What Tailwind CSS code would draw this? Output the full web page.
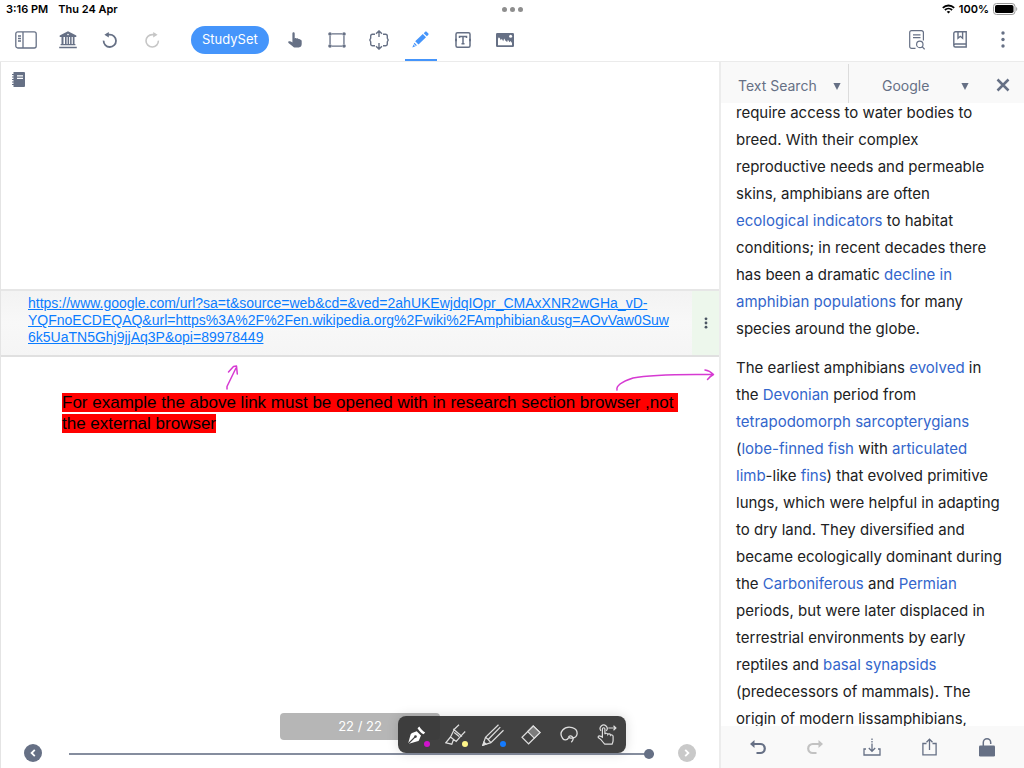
<!DOCTYPE html>
<html lang="en">
<head>
<meta charset="utf-8">
<meta name="viewport" content="width=device-width, initial-scale=1">
<title>StudySet</title>
<script src="https://cdn.jsdelivr.net/npm/@tailwindcss/browser@4"></script>
</head>
<body class="bg-white font-['Inter','Liberation_Sans',sans-serif] text-[#202122]">
<div class="relative flex h-screen flex-col overflow-hidden">

  <!-- Status bar -->
  <div class="relative flex h-[18px] shrink-0 items-center justify-between pr-1.5 pl-1.5 text-[11px] font-semibold text-black">
    <div class="flex gap-2.5"><span>3:16 PM</span><span>Thu 24 Apr</span></div>
    <div class="absolute inset-x-0 top-[7px] flex justify-center gap-[3px]">
      <span class="size-[5px] rounded-full bg-[#8e8e8e]"></span><span class="size-[5px] rounded-full bg-[#8e8e8e]"></span><span class="size-[5px] rounded-full bg-[#8e8e8e]"></span>
    </div>
    <div class="flex items-center gap-1">
      <svg width="13" height="10" viewBox="0 0 13 10" fill="none" stroke="#000" stroke-width="1.8"><path d="M.8 3.8a8.2 8.2 0 0 1 11.4 0M2.9 6a5.2 5.2 0 0 1 7.2 0"/><path d="M6.500 9.600 4.700 7.800a2.700 2.700 0 0 1 3.600 0z" fill="#000" stroke="none"/></svg>
      <span>100%</span>
      <svg width="25" height="12" viewBox="0 0 25 12"><rect x=".5" y=".5" width="21.500" height="11" rx="3" fill="none" stroke="#9a9a9a"/><rect x="2" y="2" width="18.500" height="8" rx="1.800"/><path d="M23.200 4v4c1.400-.6 1.400-3.400 0-4z" fill="#9a9a9a"/></svg>
    </div>
  </div>

  <!-- Toolbar -->
  <header class="flex h-11 shrink-0 items-stretch justify-between border-b border-[#ebebeb] pl-[5px] text-[#667085]">
    <nav class="flex items-stretch" aria-label="Tools">
      <button aria-label="Sidebar" class="flex w-[42px] items-center justify-center">
        <svg width="22" height="18" viewBox="0 0 22 18" fill="none" stroke="currentColor" stroke-width="1.300"><rect x=".8" y=".8" width="20.400" height="16.200" rx="2"/><path d="M8 1v16M3 5h3M3 7.500h3M3 10h3" /></svg>
      </button>
      <button aria-label="Library" class="flex w-[42px] items-center justify-center">
        <svg width="18" height="18" viewBox="0 0 18 18" fill="currentColor"><path d="M9 .3 17.300 4.600V6H.7V4.600z"/><path d="M2.500 6h2v8h-2zM6 6h1.600v8H6zM8.600 6h1.500v8H8.600zM11.100 6h1.500v8h-1.500zM13.800 6h1.700v8h-1.700zM1.600 13h14.800v1.300H1.600zM.2 15.800h17.600v1.400H.2z"/><circle cx="9" cy="3.500" r=".8" fill="#fff"/></svg>
      </button>
      <button aria-label="Undo" class="flex w-[42px] items-center justify-center">
        <svg width="16" height="16" viewBox="0 0 16 16" fill="none" stroke="currentColor" stroke-width="1.800"><path d="M1.600 8.600a6.200 6.200 0 1 0 6-6H4.500"/><path d="M6.800 0v5.400L2.400 2.700z" fill="currentColor" stroke="none"/></svg>
      </button>
      <button aria-label="Redo" class="flex w-[42px] items-center justify-center text-[#c6c6c6]">
        <svg width="16" height="16" viewBox="0 0 16 16" fill="none" stroke="currentColor" stroke-width="1.600"><path d="M14.400 8.600a6.200 6.200 0 1 1-6-6h3"/><path d="M9.200 0v5.400l4.400-2.700z" fill="currentColor" stroke="none"/></svg>
      </button>
      <button class="ml-[18px] h-7 self-center rounded-full bg-[#4595fb] px-[11px] text-[13px] text-white">StudySet</button>
      <button aria-label="Hand" class="ml-[5px] flex w-[42px] items-center justify-center">
        <svg width="14" height="16" viewBox="0 0 14 16" fill="currentColor"><path d="M4.400 1.600c0-1.700 2.300-1.700 2.300 0v4.800c.6-.5 1.500-.4 1.900.2.600-.4 1.500-.3 1.900.4.700-.3 1.700 0 1.900.7.900 0 1.300.6 1.300 1.500v2.900c0 1.800-.9 3.400-3 3.400H7.200c-1.200 0-1.900-.5-2.600-1.300L.5 10.900c-.5-.6-.3-1.400.4-1.600 1.100-.3 2.300.3 3.500 1.100z"/></svg>
      </button>
      <button aria-label="Select area" class="flex w-[42px] items-center justify-center">
        <svg width="18" height="16" viewBox="0 0 18 16" fill="currentColor"><path d="M4 1.200h10v1.300H4zM4 13.500h10v1.300H4zM1.400 4h1.300v8H1.400zM15.300 4h1.300v8h-1.300z"/><circle cx="2" cy="2" r="1.800"/><circle cx="16" cy="2" r="1.800"/><circle cx="2" cy="14" r="1.800"/><circle cx="16" cy="14" r="1.800"/></svg>
      </button>
      <button aria-label="Expand" class="flex w-[42px] items-center justify-center">
        <svg width="20" height="20" viewBox="0 0 20 20" fill="none" stroke="currentColor" stroke-width="1.400"><path d="M6 4.200H3.500a1.800 1.800 0 0 0-1.800 1.800v2.200L.8 10l.9 1.800V14a1.800 1.800 0 0 0 1.800 1.800H6M14 4.200h2.500A1.800 1.800 0 0 1 18.300 6v2.200l.9 1.800-.9 1.800V14a1.800 1.800 0 0 1-1.800 1.800H14M10 1v6M7 3.700 10 .9l3 2.800M10 13v6M7 16.300l3 2.800 3-2.800"/></svg>
      </button>
      <button aria-label="Pen" aria-pressed="true" class="flex w-[42px] items-stretch justify-center px-[5px] text-[#4595fb]">
        <span class="flex flex-1 items-center justify-center border-b-2 border-[#4595fb] pt-0.5">
        <svg width="17" height="17" viewBox="0 0 17 17" fill="currentColor"><path d="M10.800 3.100 14 6.200 6.500 13.400 3.200 10.300zM11.700 2.200l1.300-1.300c.5-.5 1.300-.5 1.800 0l1.400 1.400c.5.5.5 1.200 0 1.700L14.800 5.300zM2.300 11.800l-2 4.700 4.400-1.700-.6-1.600z"/><path d="M1 12.500 4 15.600" stroke="#fff" stroke-width="1"/></svg></span>
      </button>
      <button aria-label="Text box" class="flex w-[42px] items-center justify-center">
        <svg width="16" height="16" viewBox="0 0 16 16" fill="none" stroke="currentColor" stroke-width="1.500"><rect x="1" y=".8" width="14" height="14.400" rx="1.500"/><path d="M4.500 6V4.600h7V6M8 4.600V12M6.500 11.800h3"/><path d="M0 8h2M14 8h2" stroke-width="2.600"/></svg>
      </button>
      <button aria-label="Image" class="flex w-[42px] items-center justify-center">
        <svg width="18" height="14" viewBox="0 0 18 14"><rect width="18" height="14" rx="1.200" fill="currentColor"/><path d="M2 4v8.200h14V10l-1.400-2-1.100 1.300-1.600-2.500-.7 2.200-1.700-1.200-1.300-2.200-1 2.700L5.800 5.700l-1 1.500L3.500 4.600 2.800 5.500z" fill="#fff"/><circle cx="14.600" cy="3.300" r="1.500" fill="#fff"/></svg>
      </button>
    </nav>
    <div class="flex items-stretch">
      <button aria-label="Search document" class="flex w-[43px] items-center justify-center">
        <svg width="16" height="20" viewBox="0 0 16 20" fill="none" stroke="currentColor" stroke-width="1.200"><path d="M6.500 18.400H2.600A1.900 1.900 0 0 1 .7 16.500V2.600A1.900 1.900 0 0 1 2.600.7h9.900a1.900 1.900 0 0 1 1.900 1.900v8M4 4.800h7.500M4 7.600h7.500"/><circle cx="10.800" cy="14.400" r="3.200"/><path d="m13.100 16.700 2.500 2.600"/></svg>
      </button>
      <button aria-label="Bookmarks" class="flex w-[43px] items-center justify-center">
        <svg width="14" height="17" viewBox="0 0 14 17" fill="none" stroke="currentColor" stroke-width="1.400"><path d="M13.200 13H2.300a1.500 1.500 0 0 0 0 3h10.900V.8H2.500A1.700 1.700 0 0 0 .8 2.500v12M5 1v6.200l2.300-1.900 2.300 1.900V1"/></svg>
      </button>
      <button aria-label="More" class="flex w-[43px] items-center justify-center">
        <svg width="4" height="17" viewBox="0 0 4 17" fill="currentColor"><circle cx="2" cy="2" r="1.700"/><circle cx="2" cy="8.500" r="1.700"/><circle cx="2" cy="15" r="1.700"/></svg>
      </button>
    </div>
  </header>

  <div class="flex min-h-0 flex-1">
    <!-- Document -->
    <main class="relative flex min-w-0 flex-1 flex-col border-l border-[#e4e4e4]">
      <section class="h-[229px] shrink-0 border-b-2 border-[#e6e6e6] pt-2.5 pl-[11px]">
        <button aria-label="Notebook" class="block text-[#667085]">
          <svg width="14" height="15" viewBox="0 0 14 15"><path d="M1.500 0H12a1 1 0 0 1 1 1v13a1 1 0 0 1-1 1H1.500z" fill="currentColor"/><path d="M0 2.500h3M0 5h3M0 7.500h3M0 10h3M0 12.500h3" stroke="currentColor"/><path d="M5 3.800h6M5 6.300h6" stroke="#fff" stroke-width="1.200"/></svg>
        </button>
      </section>
      <section class="flex h-[66px] shrink-0 items-stretch border-b-2 border-[#e0e0e0] bg-linear-to-b from-[#f3f3f3] via-[#f8f8f8] to-[#f5f5f5]">
        <p class="min-w-0 flex-1 pt-1 pl-[27px] font-['Liberation_Sans',sans-serif] text-[14px] leading-[17px] whitespace-nowrap"><a href="#" class="text-[#0a7cff] underline">https://www.google.com/url?sa=t&amp;source=web&amp;cd=&amp;ved=2ahUKEwjdqIOpr_CMAxXNR2wGHa_vD-<br>YQFnoECDEQAQ&amp;url=https%3A%2F%2Fen.wikipedia.org%2Fwiki%2FAmphibian&amp;usg=AOvVaw0Suw<br>6k5UaTN5Ghj9jjAq3P&amp;opi=89978449</a></p>
        <button aria-label="Link options" class="flex w-[27px] items-center justify-center bg-[#edf7ec] text-[#4b5563]">
          <svg width="4" height="12" viewBox="0 0 4 12" fill="currentColor"><circle cx="2" cy="1.800" r="1.400"/><circle cx="2" cy="6" r="1.400"/><circle cx="2" cy="10.200" r="1.400"/></svg>
        </button>
      </section>
      <section class="relative min-h-0 flex-1 pt-[35px] pl-[61px]">
        <p class="font-['Liberation_Sans',sans-serif] text-[17px] leading-[21px] whitespace-nowrap text-black"><span class="bg-[#ff0000]">For example the above link must be opened with in research section browser ,not&nbsp;</span><br><span class="bg-[#ff0000]">the external browser</span></p>
        <svg class="absolute top-0 left-0" width="718" height="40" viewBox="0 0 718 40" fill="none" stroke="#d63ad2" stroke-width="1.500" stroke-linecap="round" stroke-linejoin="round"><path d="M226 32v-2.500L235 11M227.500 15l5-5.500 3-.5.800 8"/><path d="M616 33c-1-4 4-8 16-12 12-2.500 40-4 80-3.500M704 13c4 .5 7 3 8.500 4.500-2 1-3.500 2-6 5"/></svg>
      </section>
      <div class="absolute bottom-7 left-1/2 h-[27px] w-40 -translate-x-1/2 rounded bg-[#b6b6b6] text-center text-[13px] leading-[27px] text-white">22 / 22</div>
      <div class="flex h-[30px] shrink-0 items-center pr-[23px] pl-[23px]">
        <button aria-label="Previous page" class="flex size-[18px] items-center justify-center rounded-full bg-[#667085] text-white"><svg width="6" height="8" viewBox="0 0 6 8" fill="none" stroke="currentColor" stroke-width="1.800"><path d="M4.800.8 1.600 4l3.200 3.200"/></svg></button>
        <input type="range" min="1" max="22" value="22" aria-label="Page" class="mt-0.5 mr-6 ml-[27px] h-[10px] min-w-0 flex-1 appearance-none bg-transparent [&::-webkit-slider-runnable-track]:h-[2px] [&::-webkit-slider-runnable-track]:bg-[#858d9e] [&::-webkit-slider-thumb]:-mt-1 [&::-webkit-slider-thumb]:size-[10px] [&::-webkit-slider-thumb]:appearance-none [&::-webkit-slider-thumb]:rounded-full [&::-webkit-slider-thumb]:bg-[#667085]">
        <button aria-label="Next page" class="flex size-[18px] items-center justify-center rounded-full bg-[#c9c9c9] text-white"><svg width="6" height="8" viewBox="0 0 6 8" fill="none" stroke="currentColor" stroke-width="1.800"><path d="M1.200.8 4.400 4 1.200 7.200"/></svg></button>
      </div>
    </main>

    <!-- Research panel -->
    <aside class="flex w-[305px] shrink-0 flex-col border-l-2 border-[#ececec]">
      <div class="flex h-[41px] shrink-0 items-stretch bg-[#f9f9f9] text-[#667085]">
        <div class="relative mt-0.5 flex w-32 border-r border-[#dcdcdc]">
          <select aria-label="Search type" class="w-full appearance-none pt-1 pl-[17px] text-[14px]"><option>Text Search</option></select>
          <svg class="pointer-events-none absolute top-[19px] right-[7px]" width="8" height="7" viewBox="0 0 8 7" fill="currentColor"><path d="M.4 0h7.200L4 7z"/></svg>
        </div>
        <div class="relative mt-0.5 flex flex-1">
          <select aria-label="Search engine" class="w-full appearance-none pt-1 pl-[33px] text-[14px]"><option>Google</option></select>
          <svg class="pointer-events-none absolute top-[19px] right-[12px]" width="8" height="7" viewBox="0 0 8 7" fill="currentColor"><path d="M.4 0h7.200L4 7z"/></svg>
        </div>
        <button aria-label="Close" class="flex w-[43px] items-center justify-center pt-1"><svg width="14" height="14" viewBox="0 0 14 14" stroke="currentColor" stroke-width="2.500"><path d="m1.500 1.500 11 11M12.500 1.500l-11 11"/></svg></button>
      </div>
      <article class="min-h-0 flex-1 overflow-hidden pl-[15px] text-[15px] leading-[27px] whitespace-nowrap [&_a]:text-[#3366cc]">
        <p class="-mt-1">require access to water bodies to<br>breed. With their complex<br>reproductive needs and permeable<br>skins, amphibians are often<br><a href="#">ecological indicators</a> to habitat<br>conditions; in recent decades there<br>has been a dramatic <a href="#">decline in<br>amphibian populations</a> for many<br>species around the globe.</p>
        <p class="mt-3">The earliest amphibians <a href="#">evolved</a> in<br>the <a href="#">Devonian</a> period from<br><a href="#">tetrapodomorph</a> <a href="#">sarcopterygians</a><br>(<a href="#">lobe-finned fish</a> with <a href="#">articulated<br>limb</a>-like <a href="#">fins</a>) that evolved primitive<br>lungs, which were helpful in adapting<br>to dry land. They diversified and<br>became ecologically dominant during<br>the <a href="#">Carboniferous</a> and <a href="#">Permian</a><br>periods, but were later displaced in<br>terrestrial environments by early<br>reptiles and <a href="#">basal synapsids</a><br>(predecessors of mammals). The<br>origin of modern lissamphibians,</p>
      </article>
      <footer class="grid h-[42px] shrink-0 grid-cols-5 bg-[#f9f9f9] pr-2 pl-2 text-[#667085]">
        <button aria-label="Back" class="flex items-center justify-center"><svg width="16" height="15" viewBox="0 0 16 15" fill="none" stroke="currentColor" stroke-width="2.200"><path d="M3 4h7.300a4.400 4.400 0 0 1 0 9H6.500"/><path d="M4.500 0v8L0 4z" fill="currentColor" stroke="none"/></svg></button>
        <button aria-label="Forward" class="flex items-center justify-center text-[#c2c2c2]"><svg width="16" height="15" viewBox="0 0 16 15" fill="none" stroke="currentColor" stroke-width="2.200"><path d="M13 4H5.700a4.400 4.400 0 0 0 0 9h3.800"/><path d="M11.500 0v8L16 4z" fill="currentColor" stroke="none"/></svg></button>
        <button aria-label="Download" class="flex items-center justify-center"><svg width="18" height="18" viewBox="0 0 18 18" fill="none" stroke="currentColor" stroke-width="1.300"><path d="M3 11H1v6h16v-6h-2M9 5.500v7.500M5.800 10 9 13.300l3.200-3.300M9 .5V2M9 3v1.500"/></svg></button>
        <button aria-label="Share" class="flex items-center justify-center"><svg width="15" height="18" viewBox="0 0 15 18" fill="none" stroke="currentColor" stroke-width="1.300"><path d="M4.500 5.500H.9v11.400h13.200V5.500h-3.600M7.500 12V1.500M4.500 4.200l3-3 3 3"/></svg></button>
        <button aria-label="Unlock" class="flex items-center justify-center"><svg width="16" height="19" viewBox="0 0 16 19" fill="none" stroke="currentColor" stroke-width="1.500"><path d="M4.300 8V4.500a3.700 3.700 0 0 1 7.400 0V6" /><rect x="0" y="7.500" width="16" height="11" rx="1.300" fill="currentColor" stroke="none"/></svg></button>
      </footer>
    </aside>
  </div>

  <!-- Floating pen palette -->
  <div role="toolbar" aria-label="Pens" class="absolute bottom-[15px] left-1/2 flex h-[37px] w-[228px] -translate-x-1/2 items-stretch rounded-lg bg-[#373737]/95 text-[#dedede] shadow-[0_0_12px_rgba(0,0,0,0.15)] [&>button]:relative [&>button]:flex [&>button]:flex-1 [&>button]:items-center [&>button]:justify-center">
    <button aria-label="Fountain pen"><svg width="20" height="20" viewBox="0 0 20 20" fill="#fff"><path d="M1 19 3.600 9.600c.2-.8.7-1.400 1.500-1.700l4.600-1.700 4.300 4.300-1.900 4.400c-.3.700-.8 1.200-1.600 1.400zM10.500 3.200 12.300 1.500c1.600 2.500 3.200 4.200 5.900 6L16.500 9.300c-2.500-1.500-4.500-3.500-6-6.100z"/><path d="M1 19l7-7" stroke="#404040" stroke-width="1.100"/><circle cx="8.500" cy="11.600" r="1.300" fill="#404040"/></svg><span class="absolute right-[6px] bottom-[6px] size-1.5 rounded-full bg-[#d012cc]"></span></button>
    <button aria-label="Highlighter"><svg width="21" height="21" viewBox="0 0 21 21" fill="none" stroke="currentColor" stroke-width="1.200"><path d="M14 .8 8.800 5.800M8.200 5 17 12.500M20.200 7.500 16 11.800M9 6 5.500 13l5.700 4.500L16 11.800M5.500 13 .8 18.800l6 1.400 1.700-4.700M9.200 8.500l5 4"/></svg><span class="absolute right-[6px] bottom-[6px] size-1.5 rounded-full bg-[#fff68a]"></span></button>
    <button aria-label="Pencil"><svg width="22" height="22" viewBox="0 0 22 22" fill="none" stroke="currentColor" stroke-width="1.200"><path d="M16.500.8 3.500 13.300.9 21.200l8-2.600L21.500 6.200M18.300 3.200 6.200 15.500M3.500 13.300l2.700 2.200 2.700 3.100"/><path d="m.9 21.200 1-3.200 2.200 2.100z" fill="currentColor"/></svg><span class="absolute right-[6px] bottom-[6px] size-1.5 rounded-full bg-[#147bff]"></span></button>
    <button aria-label="Eraser"><svg width="20" height="20" viewBox="0 0 20 20" fill="none" stroke="currentColor" stroke-width="1.200"><path d="M12.300 1 1 12.200l6.600 6.600L19 7.600z"/><path d="M12.300 1 6.700 6.600l6.600 6.500L19 7.600z" fill="#7c7c7c"/></svg></button>
    <button aria-label="Lasso"><svg width="18" height="18" viewBox="0 0 18 18" fill="none" stroke="currentColor" stroke-width="1.300"><path d="M8.500 11.900C7 14.600 4.200 14.500 2.700 12.500.8 10 .5 6.500 2.700 4 5 1.400 8.700.8 12.200 1.600c3.300.8 5.100 3.400 4.900 6.200-.2 2.300-2.400 3.900-4.300 4.200-2.500.3-4.200-.3-4-1.300.3-1 2.200-1.200 3.300-.3 1.700 1.300 1.400 3.500-.8 5.800"/></svg></button>
    <button aria-label="Gesture"><svg width="20" height="21" viewBox="0 0 20 21" fill="none" stroke="currentColor" stroke-width="1.200"><path d="M5.400 13.200V5c0-1.700 2.500-1.700 2.500 0v5.200c.3-1.300 2.600-1.300 2.900.3.600-1 2.600-.7 2.700.7.700-.8 2.600-.3 2.600 1.200v4.100c0 1.500-.6 2.300-1 3.600H7.700c-1.500-1.300-2.700-4-5.800-6-1.600-1.100-.3-2.700 1.300-2 .9.300 1.500.7 2.200 1.100z"/><path d="M4 6.800a3.500 3.500 0 1 1 5.300 0M11.300 4h7.500M16.500 1.700 18.900 4l-2.400 2.300"/></svg></button>
  </div>
</div>
</body>
</html>
